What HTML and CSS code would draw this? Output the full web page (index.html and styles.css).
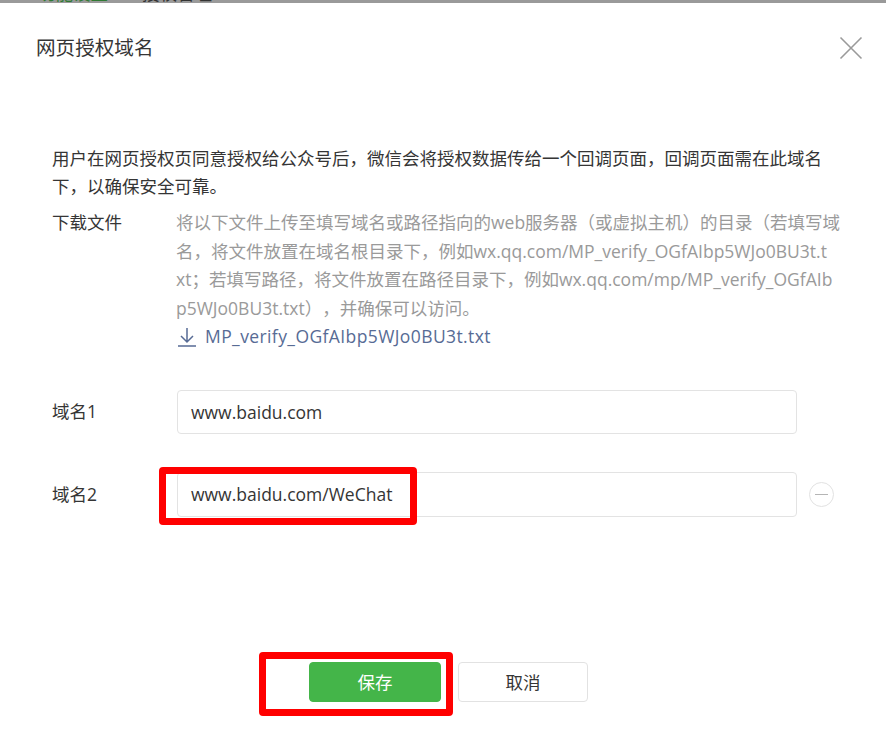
FILE: index.html
```html
<!DOCTYPE html>
<html lang="zh-CN">
<head>
<meta charset="utf-8">
<title>网页授权域名</title>
<link rel="stylesheet" href="styles.css">
</head>
<body>
<div class="topbar">
  <div class="topbar-inner">
    <span class="tab tab-active">功能设置</span>
    <span class="tab">授权管理</span>
  </div>
</div>
<div class="dialog">
  <div class="dialog-header">
    <h1 class="dialog-title">网页授权域名</h1>
    <button class="close-btn" aria-label="关闭">
      <svg width="24" height="24" viewBox="0 0 24 24"><path d="M1.5 1.5 L22.5 22.5 M22.5 1.5 L1.5 22.5" stroke="#9a9a9a" stroke-width="1.6" fill="none"/></svg>
    </button>
  </div>
  <div class="dialog-body">
    <p class="desc">用户在网页授权页同意授权给公众号后，微信会将授权数据传给一个回调页面，回调页面需在此域名下，以确保安全可靠。</p>
    <div class="download-row">
      <div class="label">下载文件</div>
      <div class="download-info">
        <div class="tips">将以下文件上传至填写域名或路径指向的web服务器（或虚拟主机）的目录（若填写域<br>名，将文件放置在域名根目录下，例如wx.qq.com/MP_verify_OGfAIbp5WJo0BU3t.t<br>xt；若填写路径，将文件放置在路径目录下，例如wx.qq.com/mp/MP_verify_OGfAIb<br>p5WJo0BU3t.txt），并确保可以访问。</div>
        <a class="file-link" href="#">
          <svg class="dl-icon" width="22" height="20" viewBox="0 0 22 20"><path d="M11 1 V15 M5 9 L11 15 L17 9 M2 19 H20" stroke="#576b95" stroke-width="1.5" fill="none"/></svg>
          <span>MP_verify_OGfAIbp5WJo0BU3t.txt</span>
        </a>
      </div>
    </div>
    <div class="form-row first">
      <div class="label">域名1</div>
      <div class="input-wrap">
        <div class="input">www.baidu.com</div>
      </div>
    </div>
    <div class="form-row second">
      <div class="label">域名2</div>
      <div class="input-wrap marked">
        <div class="input">www.baidu.com/WeChat</div>
      </div>
      <button class="minus-btn" aria-label="删除"><span class="minus-line"></span></button>
    </div>
  </div>
  <div class="dialog-footer">
    <div class="btn-wrap marked-save">
      <button class="btn btn-primary">保存</button>
    </div>
    <button class="btn btn-default">取消</button>
  </div>
</div>
</body>
</html>
```

FILE: styles.css
```css
*, *::before, *::after { box-sizing: border-box; }
html, body { margin: 0; padding: 0; background: #fff; }
body {
  font-family: "Open Sans", "Noto Sans CJK SC", sans-serif;
  color: #353535;
  font-size: 17.5px;
  width: 886px;
  height: 742px;
  overflow: hidden;
  text-spacing-trim: space-all;
  font-feature-settings: "chws" 0, "halt" 0;
}
.topbar {
  height: 3px;
  background: #9a9a9a;
  overflow: hidden;
}
.topbar-inner {
  margin-top: -16px;
  padding-left: 38px;
  display: flex;
  gap: 34px;
  font-size: 17.5px;
  line-height: 18px;
}
.tab { color: #333; }
.tab-active { color: #2f7a33; }

.dialog-header {
  height: 90px;
  display: flex;
  align-items: center;
  justify-content: space-between;
  padding: 0 23px 0 36px;
}
.dialog-title {
  margin: 0;
  font-size: 19.6px;
  font-weight: normal;
  line-height: 28px;
  color: #353535;
}
.close-btn {
  border: 0;
  background: none;
  padding: 0;
  width: 24px;
  height: 24px;
  display: block;
}
.close-btn svg { display: block; }

.dialog-body {
  padding: 51px 0 0 52px;
}
.desc {
  margin: 0;
  width: 780px;
  line-height: 28px;
}
.download-row {
  display: flex;
  margin-top: 8px;
}
.label {
  width: 124px;
  flex: none;
  line-height: 28.5px;
}
.download-info {
  line-height: 28.5px;
}
.tips {
  color: #9a9a9a;
  white-space: nowrap;
}
.file-link {
  display: flex;
  align-items: center;
  gap: 7px;
  color: #576b95;
  text-decoration: none;
  height: 28.5px;
  letter-spacing: 0.4px;
}
.dl-icon { display: block; margin-top: 2px; }

.form-row {
  display: flex;
  align-items: center;
}
.form-row .label { width: 125px; }
.form-row.first { margin-top: 39px; }
.form-row.second { margin-top: 38px; }
.input-wrap {
  position: relative;
  width: 620px;
}
.input {
  height: 44px;
  border: 1px solid #e3e3e3;
  border-radius: 4px;
  padding-left: 13px;
  display: flex;
  align-items: center;
  color: #353535;
  font-size: 17.5px;
}
.form-row.second .input { height: 45px; }
.marked::after {
  content: "";
  position: absolute;
  left: -18px;
  top: -5px;
  width: 258px;
  height: 58px;
  border: 7px solid #ff0000;
  border-radius: 4px;
}
.minus-btn {
  margin-left: 12px;
  width: 25px;
  height: 25px;
  border: 1px solid #e2e2e2;
  border-radius: 50%;
  background: #fff;
  padding: 0;
  display: flex;
  align-items: center;
  justify-content: center;
}
.minus-line {
  width: 13px;
  height: 1px;
  background: #b5b5b5;
}

.dialog-footer {
  margin-top: 145px;
  display: flex;
  justify-content: center;
  padding-left: 11px;
  gap: 17px;
}
.btn-wrap { position: relative; }
.btn {
  height: 40px;
  border-radius: 4px;
  font-family: "Open Sans", "Noto Sans CJK SC", sans-serif;
  font-size: 17.5px;
  padding: 0;
  display: block;
}
.btn-primary {
  width: 132px;
  background: #44b549;
  border: 1px solid #44b549;
  color: #fff;
}
.btn-default {
  width: 130px;
  background: #fff;
  border: 1px solid #e2e2e2;
  color: #353535;
}
.marked-save::after {
  content: "";
  position: absolute;
  left: -50px;
  top: -10px;
  width: 194px;
  height: 64px;
  border: 7px solid #ff0000;
  border-radius: 4px;
}
```
